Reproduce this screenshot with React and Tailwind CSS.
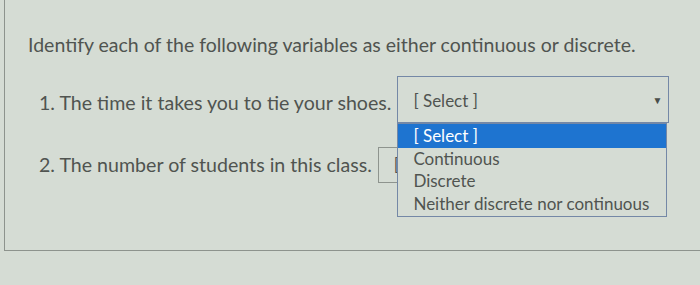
export default function App() {
  const options = ['[ Select ]', 'Continuous', 'Discrete', 'Neither discrete nor continuous']

  return (
    <div className="w-[700px] h-[285px] overflow-hidden bg-[#d5dcd4] text-[#505450] font-['Lato','Open_Sans',sans-serif]">
      <div className="ml-[4px] h-[251px] border-l border-b border-[#8d938d] pl-[23px] pt-[33px]">
        <h1 className="text-[19.5px] leading-[24px]">
          Identify each of the following variables as either continuous or discrete.
        </h1>

        <div className="mt-[19px] flex items-center pl-[11px]">
          <span className="text-[19.6px] leading-[24px] pt-[6px]">1. The time it takes you to tie your shoes.</span>
          <div className="relative ml-[6px] w-[272px] h-[47px] border border-[#7488a6]">
            <div className="flex h-full items-center justify-between pl-[15px] pr-[6px] pt-[2px] text-[17px]">
              <span>[ Select ]</span>
              <span className="text-[10px] text-[#4a4e4a]">▼</span>
            </div>
            <ul className="absolute left-[-1px] top-[46px] z-10 w-[270px] border border-[#7488a6] bg-[#d5dcd4] pb-[1px] text-[17px] leading-[22.5px]">
              {options.map((o, i) => (
                <li
                  key={o}
                  className={i === 0 ? 'bg-[#1e74d0] pl-[15px] pt-[1px] text-white' : 'pl-[15px]'}
                >
                  {o}
                </li>
              ))}
            </ul>
          </div>
        </div>

        <div className="mt-[24px] flex items-center pl-[11px]">
          <span className="text-[19.6px] leading-[24px]">2. The number of students in this class.</span>
          <div className="ml-[6px] w-[272px] h-[36px] border border-[#8e948e] flex items-center pl-[15px] text-[17px]">
            [ Select ]
          </div>
        </div>
      </div>
    </div>
  )
}
